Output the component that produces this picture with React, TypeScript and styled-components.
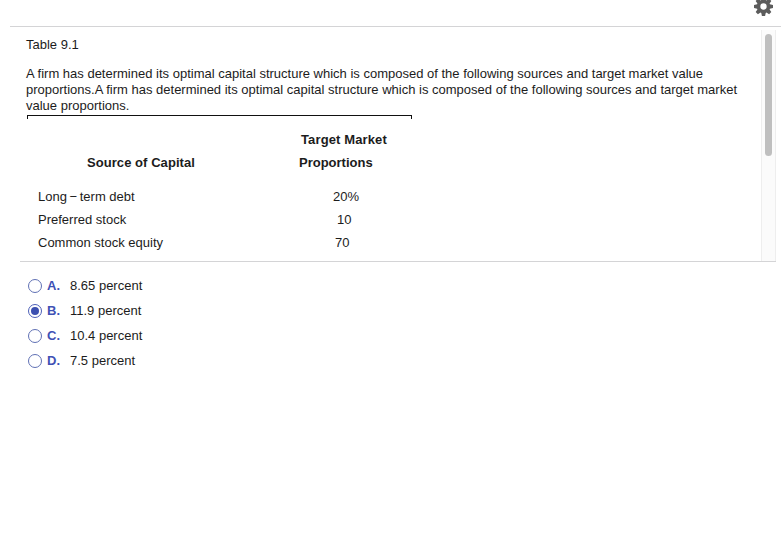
import styled, { createGlobalStyle } from 'styled-components';

const GlobalStyle = createGlobalStyle`
  html, body {
    margin: 0;
    padding: 0;
    background: #fff;
  }
  body {
    font-family: "Liberation Sans", Arial, sans-serif;
    font-size: 13px;
    color: #1c1c1c;
  }
`;

const Page = styled.div`
  width: 781px;
  height: 554px;
  overflow: hidden;
`;
const Toolbar = styled.div`
  height: 26px;
  margin-left: 10px;
  border-bottom: 1px solid #d4d4d6;
  display: flex;
  justify-content: flex-end;
  align-items: flex-start;
  padding-right: 8px;
`;
const GearIcon = styled.svg`
  width: 19px;
  height: 19px;
  margin-top: -3px;
  fill: #5c5c5c;
`;
const Pane = styled.div`
  margin: 3px 5px 0 20px;
  height: 231px;
  border-bottom: 1px solid #d4d4d6;
  display: flex;
`;
const Content = styled.div`
  flex: 1;
  padding: 7px 0 0 6px;
`;
const Title = styled.div`
  line-height: 16px;
  margin-bottom: 13px;
`;
const Question = styled.p`
  margin: 0;
  line-height: 16px;
  width: 722px;
`;
const DataTable = styled.div`
  width: 385px;
  margin: 1px 0 0 1px;
  border-top: 1px solid #111;
  position: relative;
  &::before,
  &::after {
    content: '';
    position: absolute;
    top: 0;
    width: 1px;
    height: 3px;
    background: #111;
  }
  &::before {
    left: 0;
  }
  &::after {
    right: 0;
  }
`;
const HeaderRow = styled.div`
  display: grid;
  grid-template-columns: 272px 1fr;
  height: 23px;
  line-height: 23px;
  font-weight: bold;
  &:first-child {
    margin-top: 12px;
  }
`;
const SourceHead = styled.span`
  padding-left: 60px;
  letter-spacing: 0.06px;
`;
const TargetHead = styled.span<{ $shift: number; $spacing?: number }>`
  padding-left: ${(p) => p.$shift}px;
  letter-spacing: ${(p) => p.$spacing ?? 0}px;
`;
const Rows = styled.div`
  margin-top: 11px;
`;
const Row = styled.div`
  display: grid;
  grid-template-columns: 272px 1fr;
  height: 23px;
  line-height: 23px;
`;
const Source = styled.span`
  padding-left: 11px;
`;
const Value = styled.span<{ $shift: number }>`
  padding-left: ${(p) => p.$shift}px;
`;
const ScrollTrack = styled.div`
  width: 15px;
  background: #fbfbfb;
  border-left: 1px solid #eeeeee;
  border-right: 1px solid #eeeeee;
  box-sizing: border-box;
  padding: 4px 3px 0;
`;
const ScrollThumb = styled.div`
  height: 122px;
  border-radius: 4px;
  background: #bfbfbf;
`;
const Answers = styled.div`
  padding: 11px 0 0 28px;
`;
const Answer = styled.div`
  display: flex;
  align-items: center;
  height: 25px;
`;
const Radio = styled.span<{ $checked?: boolean }>`
  width: 14px;
  height: 14px;
  box-sizing: border-box;
  border-radius: 50%;
  border: 1px solid ${(p) => (p.$checked ? '#4d5fb8' : '#5f70b4')};
  display: flex;
  align-items: center;
  justify-content: center;
  margin-right: 5px;
  &::after {
    content: '';
    display: ${(p) => (p.$checked ? 'block' : 'none')};
    width: 8px;
    height: 8px;
    border-radius: 50%;
    background: #3b4fb0;
  }
`;
const Letter = styled.span`
  width: 23px;
  font-weight: bold;
  color: #3f51b5;
`;

const rows = [
  { source: 'Long\u2009−\u2009term debt', value: '20%', shift: 34 },
  { source: 'Preferred stock', value: '10', shift: 38 },
  { source: 'Common stock equity', value: '70', shift: 36 },
];

const answers = [
  { letter: 'A.', text: '8.65 percent' },
  { letter: 'B.', text: '11.9 percent', checked: true },
  { letter: 'C.', text: '10.4 percent' },
  { letter: 'D.', text: '7.5 percent' },
];

export default function App() {
  return (
    <Page>
      <GlobalStyle />
      <Toolbar>
        <GearIcon viewBox="0 0 24 24">
          <path
            fillRule="evenodd"
            d="M10 0L14 0L14.8 3.9L15.75 4.29L19.07 2.1L21.9 4.93L19.71 8.25L20.1 9.2L24 10L24 14L20.1 14.8L19.71 15.75L21.9 19.07L19.07 21.9L15.75 19.71L14.8 20.1L14 24L10 24L9.2 20.1L8.25 19.71L4.93 21.9L2.1 19.07L4.29 15.75L3.9 14.8L0 14L0 10L3.9 9.2L4.29 8.25L2.1 4.93L4.93 2.1L8.25 4.29L9.2 3.9ZM12 8a4 4 0 1 0 0 8a4 4 0 0 0 0-8Z"
          />
        </GearIcon>
      </Toolbar>
      <Pane>
        <Content>
          <Title>Table 9.1</Title>
          <Question>
            A firm has determined its optimal capital structure which is composed of the following
            sources and target market value proportions.A firm has determined its optimal capital
            structure which is composed of the following sources and target market value
            proportions.
          </Question>
          <DataTable>
            <HeaderRow>
              <span />
              <TargetHead $shift={2} $spacing={0.12}>
                Target Market
              </TargetHead>
            </HeaderRow>
            <HeaderRow>
              <SourceHead>Source of Capital</SourceHead>
              <TargetHead $shift={0}>Proportions</TargetHead>
            </HeaderRow>
            <Rows>
              {rows.map((row) => (
                <Row key={row.source}>
                  <Source>{row.source}</Source>
                  <Value $shift={row.shift}>{row.value}</Value>
                </Row>
              ))}
            </Rows>
          </DataTable>
        </Content>
        <ScrollTrack>
          <ScrollThumb />
        </ScrollTrack>
      </Pane>
      <Answers>
        {answers.map((answer) => (
          <Answer key={answer.letter}>
            <Radio $checked={answer.checked} />
            <Letter>{answer.letter}</Letter>
            <span>{answer.text}</span>
          </Answer>
        ))}
      </Answers>
    </Page>
  );
}
